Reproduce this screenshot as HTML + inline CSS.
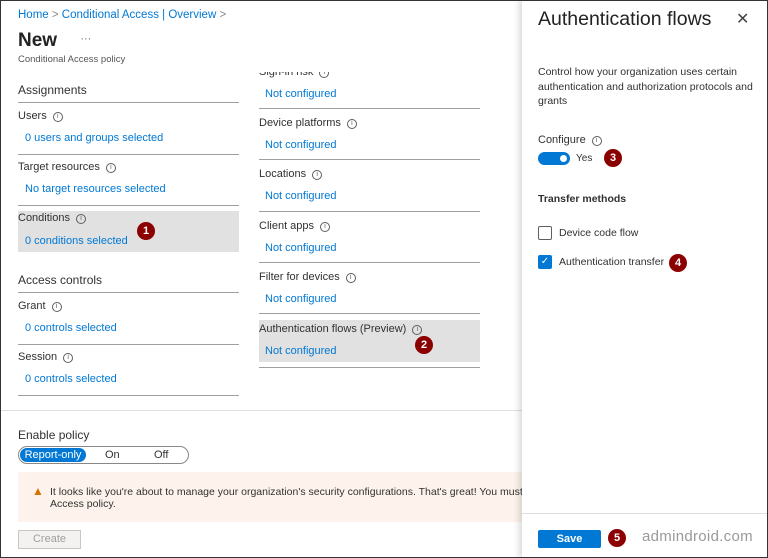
<!DOCTYPE html>
<html><head><meta charset="utf-8"><style>
*{margin:0;padding:0;box-sizing:border-box}
body{width:768px;height:558px;overflow:hidden;background:#fff;font-family:"Liberation Sans",sans-serif;font-size:11px;color:#323130;position:relative}
.a{position:absolute;white-space:nowrap}
.l{color:#0078d4}
.hr{position:absolute;height:1px;background:#a19f9d}
.i{display:inline-block;width:10px;height:10px;border:1px solid #605e5c;border-radius:50%;font-size:7px;line-height:8px;text-align:center;margin-left:6px;vertical-align:1px;color:#605e5c}
.b{position:absolute;width:18px;height:18px;border-radius:50%;background:#8b0000;color:#fff;font-size:11px;font-weight:bold;text-align:center;line-height:18px}
.g{position:absolute;background:#e1e1e1}
</style></head><body>
<div style="position:absolute;inset:0;border:1px solid #333;z-index:9;pointer-events:none"></div>
<div class="a l" style="left:18px;top:9px;font-size:11.5px">Home <span style="color:#888">&gt;</span> Conditional Access | Overview <span style="color:#888">&gt;</span></div>
<div class="a" style="left:18px;top:30px;font-size:19px;font-weight:bold;color:#222">New <span style="font-size:11px;font-weight:normal;color:#666;margin-left:18px;vertical-align:4px">···</span></div>
<div class="a" style="left:18px;top:54px;font-size:9.5px;color:#555">Conditional Access policy</div>

<div class="g" style="left:18px;top:211px;width:221px;height:41px"></div>
<div class="g" style="left:259px;top:320px;width:221px;height:42px"></div>

<div class="a" style="left:18px;top:83px;font-size:12px">Assignments</div><div class="hr" style="left:18px;top:102px;width:221px"></div>
<div class="a" style="left:18px;top:110px">Users<span class="i">i</span></div><div class="a l" style="left:25px;top:132px">0 users and groups selected</div><div class="hr" style="left:18px;top:154px;width:221px"></div>
<div class="a" style="left:18px;top:161px">Target resources<span class="i">i</span></div><div class="a l" style="left:25px;top:183px">No target resources selected</div><div class="hr" style="left:18px;top:205px;width:221px"></div>
<div class="a" style="left:18px;top:212px">Conditions<span class="i">i</span></div><div class="a l" style="left:25px;top:235px">0 conditions selected</div><div class="b" style="left:137px;top:222px">1</div>
<div class="a" style="left:18px;top:273px;font-size:12px">Access controls</div><div class="hr" style="left:18px;top:292px;width:221px"></div>
<div class="a" style="left:18px;top:300px">Grant<span class="i">i</span></div><div class="a l" style="left:25px;top:322px">0 controls selected</div><div class="hr" style="left:18px;top:344px;width:221px"></div>
<div class="a" style="left:18px;top:351px">Session<span class="i">i</span></div><div class="a l" style="left:25px;top:373px">0 controls selected</div><div class="hr" style="left:18px;top:395px;width:221px"></div>

<div style="position:absolute;left:259px;top:72px;width:221px;height:8px;overflow:hidden"><div class="a" style="left:0;top:-6px">Sign-in risk<span class="i">i</span></div></div>
<div class="a l" style="left:265px;top:88px">Not configured</div><div class="hr" style="left:259px;top:108px;width:221px"></div>
<div class="a" style="left:259px;top:117px">Device platforms<span class="i">i</span></div><div class="a l" style="left:265px;top:139px">Not configured</div><div class="hr" style="left:259px;top:159px;width:221px"></div>
<div class="a" style="left:259px;top:168px">Locations<span class="i">i</span></div><div class="a l" style="left:265px;top:190px">Not configured</div><div class="hr" style="left:259px;top:211px;width:221px"></div>
<div class="a" style="left:259px;top:220px">Client apps<span class="i">i</span></div><div class="a l" style="left:265px;top:242px">Not configured</div><div class="hr" style="left:259px;top:262px;width:221px"></div>
<div class="a" style="left:259px;top:271px">Filter for devices<span class="i">i</span></div><div class="a l" style="left:265px;top:293px">Not configured</div><div class="hr" style="left:259px;top:313px;width:221px"></div>
<div class="a" style="left:259px;top:323px">Authentication flows (Preview)<span class="i">i</span></div><div class="a l" style="left:265px;top:345px">Not configured</div><div class="b" style="left:415px;top:336px">2</div><div class="hr" style="left:259px;top:367px;width:221px"></div>

<div class="hr" style="left:0;top:410px;width:522px;background:#e1dfdd"></div>
<div class="a" style="left:18px;top:428px;font-size:12px">Enable policy</div>
<div style="position:absolute;left:18px;top:446px;width:171px;height:18px;border:1px solid #8a8886;border-radius:9px"></div>
<div class="a" style="left:20px;top:448px;width:66px;height:14px;background:#0078d4;border-radius:7px;color:#fff;text-align:center;line-height:14px">Report-only</div>
<div class="a" style="left:105px;top:449px">On</div><div class="a" style="left:154px;top:449px">Off</div>
<div style="position:absolute;left:18px;top:472px;width:504px;height:50px;background:#fdf3ec"></div>
<div class="a" style="left:32px;top:484px;color:#d47500;font-size:12px">▲</div>
<div class="a" style="left:50px;top:486px;font-size:10.5px;line-height:12px">It looks like you're about to manage your organization's security configurations. That's great! You must first <u class="l" style="color:#0078d4">disab</u><br>Access policy.</div>
<div class="a" style="left:18px;top:530px;width:63px;height:19px;border:1px solid #c8c6c4;background:#f3f2f1;color:#a19f9d;text-align:center;line-height:17px">Create</div>

<div style="position:absolute;left:522px;top:0;width:246px;height:558px;background:#fff;box-shadow:-3px 0 6px rgba(0,0,0,.15)">
<div class="a" style="left:16px;top:8px;font-size:19.5px;color:#222">Authentication flows</div>
<div class="a" style="left:214px;top:9px;font-size:16px;color:#444">✕</div>
<div class="a" style="left:16px;top:65px;font-size:10.5px;line-height:14.5px;white-space:normal;width:220px">Control how your organization uses certain authentication and authorization protocols and grants</div>
<div class="a" style="left:16px;top:134px">Configure<span class="i">i</span></div>
<div style="position:absolute;left:16px;top:152px;width:32px;height:13px;border-radius:7px;background:#0078d4"><div style="position:absolute;right:3px;top:3px;width:7px;height:7px;border-radius:50%;background:#fff"></div></div>
<div class="a" style="left:54px;top:153px;font-size:10px">Yes</div>
<div class="b" style="left:82px;top:149px">3</div>
<div class="a" style="left:16px;top:193px;font-weight:bold;font-size:10.5px">Transfer methods</div>
<div style="position:absolute;left:16px;top:226px;width:14px;height:14px;border:1px solid #605e5c;border-radius:2px"></div>
<div class="a" style="left:37px;top:227px;font-size:10.5px">Device code flow</div>
<div style="position:absolute;left:16px;top:255px;width:14px;height:14px;background:#0078d4;border-radius:2px;color:#fff;font-size:10px;text-align:center;line-height:14px">✓</div>
<div class="a" style="left:37px;top:256px;font-size:10.5px">Authentication transfer</div>
<div class="b" style="left:147px;top:254px">4</div>
<div style="position:absolute;left:0;top:513px;width:246px;height:1px;background:#e1dfdd"></div>
<div class="a" style="left:16px;top:530px;width:63px;height:18px;background:#0078d4;border-radius:2px;color:#fff;font-weight:bold;text-align:center;line-height:18px">Save</div>
<div class="b" style="left:86px;top:529px">5</div>
<div class="a" style="left:120px;top:528px;font-size:15px;color:#999;letter-spacing:.3px">admindroid.com</div>
</div>
</body></html>
